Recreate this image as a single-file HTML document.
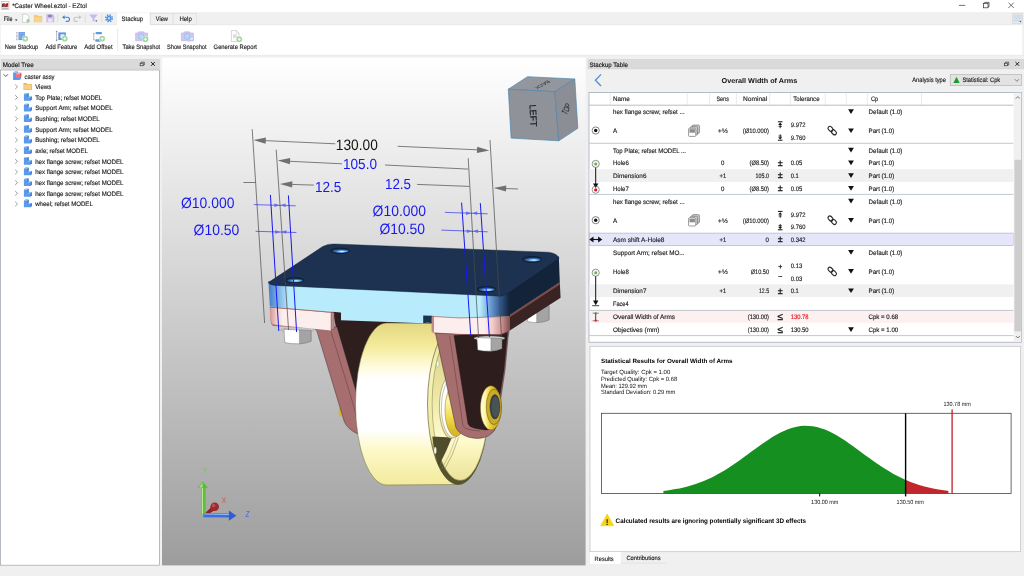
<!DOCTYPE html>
<html lang="en"><head><meta charset="utf-8"><title>*Caster Wheel.eztol - EZtol</title>
<style>html,body{margin:0;padding:0;background:#f0f0f0;overflow:hidden}body{width:1024px;height:576px;font-family:"Liberation Sans",sans-serif}svg{display:block;will-change:transform}</style></head>
<body>
<svg width="1024" height="576" viewBox="0 0 1024 576" font-family="'Liberation Sans', sans-serif" text-rendering="geometricPrecision">
<defs>
<linearGradient id="gView" x1="0" y1="0" x2="0" y2="1"><stop offset="0" stop-color="#ffffff"/><stop offset="1" stop-color="#9d9d9d"/></linearGradient>
<linearGradient id="gWheel" gradientUnits="userSpaceOnUse" x1="0" y1="322" x2="0" y2="486">
 <stop offset="0" stop-color="#e2d680"/><stop offset="0.15" stop-color="#f4eb9c"/><stop offset="0.28" stop-color="#fffce0"/><stop offset="0.35" stop-color="#ffffff"/><stop offset="0.66" stop-color="#ffffff"/><stop offset="0.78" stop-color="#fdf9c8"/><stop offset="1" stop-color="#f2ea9c"/></linearGradient>
<linearGradient id="gFrontL" gradientUnits="userSpaceOnUse" x1="268" y1="0" x2="289" y2="0"><stop offset="0" stop-color="#3e78c6"/><stop offset="0.5" stop-color="#7fb3e6"/><stop offset="1" stop-color="#b8ecfc"/></linearGradient>
<linearGradient id="gFrontR" gradientUnits="userSpaceOnUse" x1="480" y1="0" x2="509" y2="0"><stop offset="0" stop-color="#b8ecfc"/><stop offset="0.35" stop-color="#6c9fd6"/><stop offset="0.75" stop-color="#2c4f82"/><stop offset="1" stop-color="#15263e"/></linearGradient>
<linearGradient id="gPinkL" gradientUnits="userSpaceOnUse" x1="269" y1="0" x2="283" y2="0"><stop offset="0" stop-color="#cf8c8c"/><stop offset="0.55" stop-color="#f3d0d0"/><stop offset="1" stop-color="#fdeeee"/></linearGradient>
<linearGradient id="gPinkR" gradientUnits="userSpaceOnUse" x1="484" y1="0" x2="510" y2="0"><stop offset="0" stop-color="#fdeeee"/><stop offset="0.35" stop-color="#f0c8c8"/><stop offset="0.7" stop-color="#c88e8e"/><stop offset="1" stop-color="#7a4c4c"/></linearGradient>
<linearGradient id="gHole" x1="0" y1="0" x2="1" y2="0"><stop offset="0" stop-color="#3b6eb0"/><stop offset="0.6" stop-color="#9fd0f4"/><stop offset="1" stop-color="#4d83c4"/></linearGradient>
<linearGradient id="gHub" gradientUnits="userSpaceOnUse" x1="0" y1="350" x2="0" y2="450"><stop offset="0" stop-color="#e8e098"/><stop offset="0.35" stop-color="#ffffff"/><stop offset="0.6" stop-color="#fffde0"/><stop offset="1" stop-color="#d8cf7c"/></linearGradient>
<linearGradient id="gGold" gradientUnits="userSpaceOnUse" x1="0" y1="380" x2="0" y2="432"><stop offset="0" stop-color="#e8cf45"/><stop offset="0.4" stop-color="#fff6a8"/><stop offset="0.7" stop-color="#f4dc50"/><stop offset="1" stop-color="#d8b828"/></linearGradient>
<linearGradient id="gRim" gradientUnits="userSpaceOnUse" x1="0" y1="322" x2="0" y2="486"><stop offset="0" stop-color="#e6de96"/><stop offset="0.3" stop-color="#f7f2b6"/><stop offset="0.7" stop-color="#f1eaa4"/><stop offset="0.8" stop-color="#8a8650"/><stop offset="0.88" stop-color="#55532e"/><stop offset="1" stop-color="#55532e"/></linearGradient>
<linearGradient id="gInner" gradientUnits="userSpaceOnUse" x1="0" y1="330" x2="0" y2="482"><stop offset="0" stop-color="#d8d088"/><stop offset="0.4" stop-color="#ece5a0"/><stop offset="0.72" stop-color="#fffbd0"/><stop offset="0.85" stop-color="#f6f0b0"/><stop offset="1" stop-color="#e9e29a"/></linearGradient>
<linearGradient id="gBoss" gradientUnits="userSpaceOnUse" x1="480" y1="0" x2="495" y2="0"><stop offset="0" stop-color="#fffdf0"/><stop offset="0.35" stop-color="#fff4a0"/><stop offset="0.7" stop-color="#e8cc3a"/><stop offset="1" stop-color="#d4b428"/></linearGradient>
<radialGradient id="gHoleR" cx="0.58" cy="0.62" r="0.6"><stop offset="0" stop-color="#f0ffff"/><stop offset="0.22" stop-color="#9ad6fa"/><stop offset="0.6" stop-color="#3f78c0"/><stop offset="1" stop-color="#27497e"/></radialGradient>
<clipPath id="cView"><rect x="162" y="57" width="423.6" height="508.4"/></clipPath>
</defs>
<rect x="0" y="0" width="1024" height="576" fill="#f0f0f0"/>
<rect x="0" y="0" width="1024" height="12.2" fill="#ffffff"/>
<rect x="1.3" y="1.4" width="7.6" height="8.2" fill="#ffffff" stroke="#f3a3a6" stroke-width="0.7"/>
<rect x="2" y="4" width="6.2" height="2.6" fill="#e9343e"/>
<text x="2.1" y="7.2" font-size="5.6" fill="#2a2a2a" textLength="6" lengthAdjust="spacingAndGlyphs" font-weight="bold" font-style="italic">EZ</text>
<rect x="2.2" y="7.7" width="5.8" height="0.9" fill="#8c8c8c"/>
<text x="12.2" y="8.4" font-size="6.6" fill="#202020" textLength="74.6" lengthAdjust="spacingAndGlyphs" stroke="#202020" stroke-width="0.14">*Caster Wheel.eztol - EZtol</text>
<line x1="959" y1="5.4" x2="965.2" y2="5.4" stroke="#333" stroke-width="0.7" />
<rect x="983.4" y="3.4" width="4.6" height="4.4" fill="none" stroke="#333" stroke-width="0.7"/>
<path d="M984.6 3.4V2.4H989V6.8H988" fill="none" stroke="#333" stroke-width="0.7"/>
<line x1="1008.4" y1="2.6" x2="1013.8" y2="8" stroke="#333" stroke-width="0.7" />
<line x1="1013.8" y1="2.6" x2="1008.4" y2="8" stroke="#333" stroke-width="0.7" />
<rect x="0" y="12.2" width="1024" height="12.6" fill="#f0f0f0"/>
<rect x="0.8" y="24.8" width="1021.4" height="30.4" fill="#ffffff"/>
<line x1="0" y1="24.6" x2="117" y2="24.6" stroke="#e6e6e6" stroke-width="0.6" />
<rect x="117.2" y="12.6" width="32.8" height="13" fill="#ffffff"/>
<line x1="150.2" y1="12.6" x2="150.2" y2="24.8" stroke="#dcdcdc" stroke-width="0.6" />
<rect x="150.5" y="13.4" width="22.6" height="11.2" fill="#f0f0f0" stroke="#dadada" stroke-width="0.6"/>
<rect x="173.1" y="13.4" width="23.6" height="11.2" fill="#f0f0f0" stroke="#dadada" stroke-width="0.6"/>
<line x1="150.2" y1="24.7" x2="1022" y2="24.7" stroke="#e2e2e2" stroke-width="0.6" />
<text x="121.6" y="20.6" font-size="6.4" fill="#1a1a1a" textLength="21.6" lengthAdjust="spacingAndGlyphs" stroke="#1a1a1a" stroke-width="0.14">Stackup</text>
<text x="155.8" y="20.9" font-size="6.4" fill="#1a1a1a" textLength="12" lengthAdjust="spacingAndGlyphs" stroke="#1a1a1a" stroke-width="0.14">View</text>
<text x="179.4" y="20.9" font-size="6.4" fill="#1a1a1a" textLength="12.4" lengthAdjust="spacingAndGlyphs" stroke="#1a1a1a" stroke-width="0.14">Help</text>
<text x="3.8" y="20.7" font-size="6.4" fill="#1a1a1a" textLength="8.6" lengthAdjust="spacingAndGlyphs" stroke="#1a1a1a" stroke-width="0.14">File</text>
<path d="M14.9 19.4h2.6l-1.3 1.5z" fill="#222"/>
<path d="M22.6 14.2h4.2l2 2v6.2h-6.2z" fill="#ffffff" stroke="#b8b8b8" stroke-width="0.6"/>
<circle cx="28" cy="20.8" r="1.7" fill="#9ad29c"/>
<path d="M34.2 15.4h3l0.8 1h3.9v5.6h-7.7z" fill="#f3c76b" stroke="#e0b050" stroke-width="0.4"/>
<rect x="34.2" y="17.2" width="7.7" height="4.8" fill="#f7d487"/>
<path d="M46.6 14.6h6l1.4 1.2v6.2h-7.4z" fill="#cdbfea" stroke="#b9a8e0" stroke-width="0.4"/>
<rect x="48.2" y="14.8" width="3.6" height="2.4" fill="#8d7cc0"/>
<rect x="47.8" y="18.6" width="4.8" height="3.2" fill="#ece6f8"/>
<line x1="57.6" y1="14.2" x2="57.6" y2="22.4" stroke="#d4d4d4" stroke-width="0.6" />
<path d="M63.4 17.2h4a2.1 2.1 0 0 1 0 4.2h-1.6" fill="none" stroke="#3f86d6" stroke-width="1.1"/>
<path d="M62 17.2l2.6-2v4z" fill="#3f86d6"/>
<path d="M80 17.2h-4a2.1 2.1 0 0 0 0 4.2h1.6" fill="none" stroke="#c4c4c4" stroke-width="1.1"/>
<path d="M81.6 17.2l-2.6-2v4z" fill="#c4c4c4"/>
<line x1="85.2" y1="14.2" x2="85.2" y2="22.4" stroke="#d4d4d4" stroke-width="0.6" />
<path d="M89.2 14.6h8.6l-3.3 3.8v3.6l-2 -1v-2.6z" fill="#c9baea"/>
<path d="M95.2 20.6h2.2l-1.1 1.2z" fill="#222"/>
<line x1="101.8" y1="14.2" x2="101.8" y2="22.4" stroke="#d4d4d4" stroke-width="0.6" />
<circle cx="109" cy="18.3" r="3.3" fill="none" stroke="#4a8fe0" stroke-width="1.5" stroke-dasharray="1.4 1.2"/>
<circle cx="109" cy="18.3" r="2.6" fill="#4a8fe0"/>
<circle cx="109" cy="18.3" r="1.2" fill="#b9d6f6"/>
<rect x="1012.6" y="13.4" width="9.6" height="10" fill="#e6e6e6" stroke="#cfcfcf" stroke-width="0.5"/>
<line x1="1013.6" y1="16" x2="1021.6" y2="16" stroke="#a9c8ea" stroke-width="0.6" />
<line x1="1013.6" y1="18.2" x2="1021.6" y2="18.2" stroke="#a9c8ea" stroke-width="0.6" />
<line x1="1013.6" y1="20.4" x2="1021.6" y2="20.4" stroke="#a9c8ea" stroke-width="0.6" />
<path d="M1019.4 21h2l-1 1.1z" fill="#222"/>
<rect x="18.5" y="32.1" width="6.5" height="8" fill="#6497e2"/>
<line x1="18.5" y1="33.6" x2="25" y2="33.6" stroke="#a9c6f0" stroke-width="0.5" />
<line x1="18.5" y1="35.2" x2="25" y2="35.2" stroke="#a9c6f0" stroke-width="0.5" />
<line x1="18.5" y1="36.8" x2="25" y2="36.8" stroke="#a9c6f0" stroke-width="0.5" />
<line x1="18.5" y1="38.4" x2="25" y2="38.4" stroke="#a9c6f0" stroke-width="0.5" />
<line x1="16.9" y1="32.2" x2="16.9" y2="40" stroke="#9a9a9a" stroke-width="0.6" />
<line x1="16" y1="32.4" x2="17.8" y2="32.4" stroke="#9a9a9a" stroke-width="0.5" />
<line x1="16" y1="39.8" x2="17.8" y2="39.8" stroke="#9a9a9a" stroke-width="0.5" />
<line x1="16" y1="36.1" x2="17.8" y2="36.1" stroke="#9a9a9a" stroke-width="0.5" />
<circle cx="25.2" cy="38.7" r="3" fill="#8ed094" stroke="#f4fbf4" stroke-width="0.5"/>
<line x1="23.5" y1="38.7" x2="26.9" y2="38.7" stroke="#fff" stroke-width="1" />
<line x1="25.2" y1="37.0" x2="25.2" y2="40.400000000000006" stroke="#fff" stroke-width="1" />
<text x="4.8" y="48.7" font-size="6.4" fill="#1a1a1a" textLength="33.4" lengthAdjust="spacingAndGlyphs" stroke="#1a1a1a" stroke-width="0.14">New Stackup</text>
<rect x="58.3" y="32.4" width="7.6" height="7.6" fill="#6497e2"/>
<rect x="60.4" y="34.2" width="4.1" height="4.1" fill="#e4edfb" rx="0.9"/>
<line x1="56.6" y1="31.2" x2="56.6" y2="40.8" stroke="#8a8a8a" stroke-width="0.6" />
<path d="M56.6 30.4l1 1.6h-2zM56.6 41.4l1-1.6h-2z" fill="#8a8a8a"/>
<circle cx="64.8" cy="38.7" r="3" fill="#8ed094" stroke="#f4fbf4" stroke-width="0.5"/>
<line x1="63.099999999999994" y1="38.7" x2="66.5" y2="38.7" stroke="#fff" stroke-width="1" />
<line x1="64.8" y1="37.0" x2="64.8" y2="40.400000000000006" stroke="#fff" stroke-width="1" />
<text x="45.4" y="48.7" font-size="6.4" fill="#1a1a1a" textLength="31.8" lengthAdjust="spacingAndGlyphs" stroke="#1a1a1a" stroke-width="0.14">Add Feature</text>
<rect x="95.5" y="32.1" width="6.5" height="2.1" fill="#6497e2" rx="1"/>
<rect x="95.2" y="39.2" width="5.4" height="2.6" fill="#6497e2" rx="1"/>
<line x1="93.8" y1="33.4" x2="93.8" y2="39.8" stroke="#8a8a8a" stroke-width="0.6" />
<line x1="93" y1="33.4" x2="94.8" y2="33.4" stroke="#8a8a8a" stroke-width="0.5" />
<line x1="93" y1="39.8" x2="94.8" y2="39.8" stroke="#8a8a8a" stroke-width="0.5" />
<circle cx="102.2" cy="38.7" r="3" fill="#8ed094" stroke="#f4fbf4" stroke-width="0.5"/>
<line x1="100.5" y1="38.7" x2="103.9" y2="38.7" stroke="#fff" stroke-width="1" />
<line x1="102.2" y1="37.0" x2="102.2" y2="40.400000000000006" stroke="#fff" stroke-width="1" />
<text x="84.2" y="48.7" font-size="6.4" fill="#1a1a1a" textLength="28.4" lengthAdjust="spacingAndGlyphs" stroke="#1a1a1a" stroke-width="0.14">Add Offset</text>
<line x1="117.6" y1="28.4" x2="117.6" y2="51" stroke="#dcdcdc" stroke-width="0.6" />
<path d="M135.6 33.0h2.2l0.8-1.2h5.2l0.8 1.2h3v7.8h-12z" fill="#d3c6ef" stroke="#b5a5e2" stroke-width="0.5"/>
<circle cx="141.2" cy="36.4" r="2.8" fill="#b9d8f7" stroke="#88b4ea" stroke-width="0.6"/>
<circle cx="145.4" cy="39.2" r="3" fill="#8ed094" stroke="#f4fbf4" stroke-width="0.5"/>
<line x1="143.70000000000002" y1="39.2" x2="147.1" y2="39.2" stroke="#fff" stroke-width="1" />
<line x1="145.4" y1="37.5" x2="145.4" y2="40.900000000000006" stroke="#fff" stroke-width="1" />
<text x="122.6" y="48.7" font-size="6.4" fill="#1a1a1a" textLength="37.6" lengthAdjust="spacingAndGlyphs" stroke="#1a1a1a" stroke-width="0.14">Take Snapshot</text>
<path d="M181.4 33.0h2.2l0.8-1.2h5.2l0.8 1.2h3v7.8h-12z" fill="#d3c6ef" stroke="#b5a5e2" stroke-width="0.5"/>
<circle cx="187.0" cy="36.4" r="2.8" fill="#b9d8f7" stroke="#88b4ea" stroke-width="0.6"/>
<circle cx="191.6" cy="38.8" r="2" fill="#d6e8fa" stroke="#8cb6e8" stroke-width="0.5"/>
<line x1="190" y1="40.4" x2="188.6" y2="41.8" stroke="#8cb6e8" stroke-width="0.7" />
<text x="167" y="48.7" font-size="6.4" fill="#1a1a1a" textLength="39.6" lengthAdjust="spacingAndGlyphs" stroke="#1a1a1a" stroke-width="0.14">Show Snapshot</text>
<path d="M231.4 30.6h5l2.6 2.6v8.4h-7.6z" fill="#ffffff" stroke="#bcbcbc" stroke-width="0.6"/>
<path d="M236.4 30.6v2.6h2.6" fill="none" stroke="#bcbcbc" stroke-width="0.5"/>
<rect x="233" y="34.4" width="3.8" height="3.4" fill="#dcdcdc"/>
<circle cx="239.2" cy="39.2" r="3" fill="#8ed094" stroke="#f4fbf4" stroke-width="0.5"/>
<line x1="237.5" y1="39.2" x2="240.89999999999998" y2="39.2" stroke="#fff" stroke-width="1" />
<line x1="239.2" y1="37.5" x2="239.2" y2="40.900000000000006" stroke="#fff" stroke-width="1" />
<text x="213.6" y="48.7" font-size="6.4" fill="#1a1a1a" textLength="43.4" lengthAdjust="spacingAndGlyphs" stroke="#1a1a1a" stroke-width="0.14">Generate Report</text>
<line x1="0" y1="55.4" x2="1024" y2="55.4" stroke="#e4e4e4" stroke-width="0.6" />
<rect x="1.2" y="59.3" width="158.4" height="9.6" fill="#dadada" stroke="#cfcfcf" stroke-width="0.5"/>
<text x="2.7" y="66.6" font-size="6.4" fill="#111" textLength="31" lengthAdjust="spacingAndGlyphs" stroke="#111" stroke-width="0.14">Model Tree</text>
<rect x="140.1" y="63.2" width="3" height="2.6" fill="none" stroke="#222" stroke-width="0.6"/>
<path d="M141.1 63.2v-1h3.2v2.8h-1.2" fill="none" stroke="#222" stroke-width="0.6"/>
<line x1="151.0" y1="62" x2="154.8" y2="65.8" stroke="#111" stroke-width="0.9" />
<line x1="154.8" y1="62" x2="151.0" y2="65.8" stroke="#111" stroke-width="0.9" />
<rect x="0.6" y="70" width="159" height="495.2" fill="#ffffff" stroke="#9aa1ad" stroke-width="0.7"/>
<path d="M3.6 74.2l2.2 2.3l2.2-2.3" fill="none" stroke="#333" stroke-width="0.8"/>
<path d="M13.1 73L14.8 71.6L18 71.6L18 75.4L21.2 75.4L21.2 78.4L19.6 79.9L13.1 79.9z" fill="#5b9aea"/>
<path d="M13.1 73L14.8 71.6L18 71.6L16.6 73z" fill="#9cc4f6"/>
<path d="M15.9 74.2L17.4 72.8L21.3 72.8L21.3 76L19.8 77.4L15.9 77.4z" fill="#ee7680"/>
<path d="M15.9 74.2L17.4 72.8L21.3 72.8L19.8 74.2z" fill="#f8b0b6"/>
<path d="M19.8 74.2L21.3 72.8L21.3 76L19.8 77.4z" fill="#e25864"/>
<text x="24.6" y="78.5" font-size="6.4" fill="#1a1a1a" textLength="30" lengthAdjust="spacingAndGlyphs" stroke="#1a1a1a" stroke-width="0.14">caster assy</text>
<path d="M15.2 84.5l2.3 2.3l-2.3 2.3" fill="none" stroke="#7a7a7a" stroke-width="0.75"/>
<path d="M23.5 83.0h3l0.8 0.9h4.6v6.1h-8.4z" fill="#e3b25a"/>
<rect x="24" y="84.5" width="7.4" height="5" fill="#f6cf82"/>
<text x="35.2" y="89.1" font-size="6.4" fill="#1a1a1a" textLength="16" lengthAdjust="spacingAndGlyphs" stroke="#1a1a1a" stroke-width="0.14">Views</text>
<path d="M15.2 95.15l2.3 2.3l-2.3 2.3" fill="none" stroke="#7a7a7a" stroke-width="0.75"/>
<path d="M23.9 94.2L25.4 93.0L28.6 93.0L28.6 96.39999999999999L31.9 96.39999999999999L31.9 99.39999999999999L30.4 100.8L23.9 100.8z" fill="#5b9aea"/>
<path d="M23.9 94.2L25.4 93.0L28.6 93.0L27.2 94.2z" fill="#9cc4f6"/>
<path d="M27.2 97.6L28.6 96.39999999999999L31.9 96.39999999999999L30.4 97.6z" fill="#9cc4f6"/>
<path d="M27.2 94.2L28.6 93.0L28.6 96.39999999999999L27.2 97.6z" fill="#447fd6"/>
<path d="M30.4 97.6L31.9 96.39999999999999L31.9 99.39999999999999L30.4 100.8z" fill="#447fd6"/>
<text x="35.2" y="99.75" font-size="6.4" fill="#1a1a1a" textLength="67" lengthAdjust="spacingAndGlyphs" stroke="#1a1a1a" stroke-width="0.14">Top Plate; refset MODEL</text>
<path d="M15.2 105.8l2.3 2.3l-2.3 2.3" fill="none" stroke="#7a7a7a" stroke-width="0.75"/>
<path d="M23.9 104.85L25.4 103.64999999999999L28.6 103.64999999999999L28.6 107.04999999999998L31.9 107.04999999999998L31.9 110.04999999999998L30.4 111.44999999999999L23.9 111.44999999999999z" fill="#5b9aea"/>
<path d="M23.9 104.85L25.4 103.64999999999999L28.6 103.64999999999999L27.2 104.85z" fill="#9cc4f6"/>
<path d="M27.2 108.24999999999999L28.6 107.04999999999998L31.9 107.04999999999998L30.4 108.24999999999999z" fill="#9cc4f6"/>
<path d="M27.2 104.85L28.6 103.64999999999999L28.6 107.04999999999998L27.2 108.24999999999999z" fill="#447fd6"/>
<path d="M30.4 108.24999999999999L31.9 107.04999999999998L31.9 110.04999999999998L30.4 111.44999999999999z" fill="#447fd6"/>
<text x="35.2" y="110.39999999999999" font-size="6.4" fill="#1a1a1a" textLength="77.5" lengthAdjust="spacingAndGlyphs" stroke="#1a1a1a" stroke-width="0.14">Support Arm; refset MODEL</text>
<path d="M15.2 116.45l2.3 2.3l-2.3 2.3" fill="none" stroke="#7a7a7a" stroke-width="0.75"/>
<path d="M23.9 115.5L25.4 114.3L28.6 114.3L28.6 117.69999999999999L31.9 117.69999999999999L31.9 120.69999999999999L30.4 122.1L23.9 122.1z" fill="#5b9aea"/>
<path d="M23.9 115.5L25.4 114.3L28.6 114.3L27.2 115.5z" fill="#9cc4f6"/>
<path d="M27.2 118.89999999999999L28.6 117.69999999999999L31.9 117.69999999999999L30.4 118.89999999999999z" fill="#9cc4f6"/>
<path d="M27.2 115.5L28.6 114.3L28.6 117.69999999999999L27.2 118.89999999999999z" fill="#447fd6"/>
<path d="M30.4 118.89999999999999L31.9 117.69999999999999L31.9 120.69999999999999L30.4 122.1z" fill="#447fd6"/>
<text x="35.2" y="121.05" font-size="6.4" fill="#1a1a1a" textLength="64.5" lengthAdjust="spacingAndGlyphs" stroke="#1a1a1a" stroke-width="0.14">Bushing; refset MODEL</text>
<path d="M15.2 127.1l2.3 2.3l-2.3 2.3" fill="none" stroke="#7a7a7a" stroke-width="0.75"/>
<path d="M23.9 126.14999999999999L25.4 124.94999999999999L28.6 124.94999999999999L28.6 128.35L31.9 128.35L31.9 131.35L30.4 132.75L23.9 132.75z" fill="#5b9aea"/>
<path d="M23.9 126.14999999999999L25.4 124.94999999999999L28.6 124.94999999999999L27.2 126.14999999999999z" fill="#9cc4f6"/>
<path d="M27.2 129.54999999999998L28.6 128.35L31.9 128.35L30.4 129.54999999999998z" fill="#9cc4f6"/>
<path d="M27.2 126.14999999999999L28.6 124.94999999999999L28.6 128.35L27.2 129.54999999999998z" fill="#447fd6"/>
<path d="M30.4 129.54999999999998L31.9 128.35L31.9 131.35L30.4 132.75z" fill="#447fd6"/>
<text x="35.2" y="131.7" font-size="6.4" fill="#1a1a1a" textLength="77.5" lengthAdjust="spacingAndGlyphs" stroke="#1a1a1a" stroke-width="0.14">Support Arm; refset MODEL</text>
<path d="M15.2 137.75l2.3 2.3l-2.3 2.3" fill="none" stroke="#7a7a7a" stroke-width="0.75"/>
<path d="M23.9 136.8L25.4 135.6L28.6 135.6L28.6 139.0L31.9 139.0L31.9 142.0L30.4 143.4L23.9 143.4z" fill="#5b9aea"/>
<path d="M23.9 136.8L25.4 135.6L28.6 135.6L27.2 136.8z" fill="#9cc4f6"/>
<path d="M27.2 140.20000000000002L28.6 139.0L31.9 139.0L30.4 140.20000000000002z" fill="#9cc4f6"/>
<path d="M27.2 136.8L28.6 135.6L28.6 139.0L27.2 140.20000000000002z" fill="#447fd6"/>
<path d="M30.4 140.20000000000002L31.9 139.0L31.9 142.0L30.4 143.4z" fill="#447fd6"/>
<text x="35.2" y="142.35" font-size="6.4" fill="#1a1a1a" textLength="64.5" lengthAdjust="spacingAndGlyphs" stroke="#1a1a1a" stroke-width="0.14">Bushing; refset MODEL</text>
<path d="M15.2 148.4l2.3 2.3l-2.3 2.3" fill="none" stroke="#7a7a7a" stroke-width="0.75"/>
<path d="M23.9 147.45000000000002L25.4 146.25L28.6 146.25L28.6 149.65L31.9 149.65L31.9 152.65L30.4 154.05L23.9 154.05z" fill="#5b9aea"/>
<path d="M23.9 147.45000000000002L25.4 146.25L28.6 146.25L27.2 147.45000000000002z" fill="#9cc4f6"/>
<path d="M27.2 150.85000000000002L28.6 149.65L31.9 149.65L30.4 150.85000000000002z" fill="#9cc4f6"/>
<path d="M27.2 147.45000000000002L28.6 146.25L28.6 149.65L27.2 150.85000000000002z" fill="#447fd6"/>
<path d="M30.4 150.85000000000002L31.9 149.65L31.9 152.65L30.4 154.05z" fill="#447fd6"/>
<text x="35.2" y="153.0" font-size="6.4" fill="#1a1a1a" textLength="52.6" lengthAdjust="spacingAndGlyphs" stroke="#1a1a1a" stroke-width="0.14">axle; refset MODEL</text>
<path d="M15.2 159.04999999999998l2.3 2.3l-2.3 2.3" fill="none" stroke="#7a7a7a" stroke-width="0.75"/>
<path d="M23.9 158.1L25.4 156.89999999999998L28.6 156.89999999999998L28.6 160.29999999999998L31.9 160.29999999999998L31.9 163.29999999999998L30.4 164.7L23.9 164.7z" fill="#5b9aea"/>
<path d="M23.9 158.1L25.4 156.89999999999998L28.6 156.89999999999998L27.2 158.1z" fill="#9cc4f6"/>
<path d="M27.2 161.5L28.6 160.29999999999998L31.9 160.29999999999998L30.4 161.5z" fill="#9cc4f6"/>
<path d="M27.2 158.1L28.6 156.89999999999998L28.6 160.29999999999998L27.2 161.5z" fill="#447fd6"/>
<path d="M30.4 161.5L31.9 160.29999999999998L31.9 163.29999999999998L30.4 164.7z" fill="#447fd6"/>
<text x="35.2" y="163.64999999999998" font-size="6.4" fill="#1a1a1a" textLength="88.3" lengthAdjust="spacingAndGlyphs" stroke="#1a1a1a" stroke-width="0.14">hex flange screw; refset MODEL</text>
<path d="M15.2 169.70000000000002l2.3 2.3l-2.3 2.3" fill="none" stroke="#7a7a7a" stroke-width="0.75"/>
<path d="M23.9 168.75000000000003L25.4 167.55L28.6 167.55L28.6 170.95000000000002L31.9 170.95000000000002L31.9 173.95000000000002L30.4 175.35000000000002L23.9 175.35000000000002z" fill="#5b9aea"/>
<path d="M23.9 168.75000000000003L25.4 167.55L28.6 167.55L27.2 168.75000000000003z" fill="#9cc4f6"/>
<path d="M27.2 172.15000000000003L28.6 170.95000000000002L31.9 170.95000000000002L30.4 172.15000000000003z" fill="#9cc4f6"/>
<path d="M27.2 168.75000000000003L28.6 167.55L28.6 170.95000000000002L27.2 172.15000000000003z" fill="#447fd6"/>
<path d="M30.4 172.15000000000003L31.9 170.95000000000002L31.9 173.95000000000002L30.4 175.35000000000002z" fill="#447fd6"/>
<text x="35.2" y="174.3" font-size="6.4" fill="#1a1a1a" textLength="88.3" lengthAdjust="spacingAndGlyphs" stroke="#1a1a1a" stroke-width="0.14">hex flange screw; refset MODEL</text>
<path d="M15.2 180.35l2.3 2.3l-2.3 2.3" fill="none" stroke="#7a7a7a" stroke-width="0.75"/>
<path d="M23.9 179.4L25.4 178.2L28.6 178.2L28.6 181.6L31.9 181.6L31.9 184.6L30.4 186.0L23.9 186.0z" fill="#5b9aea"/>
<path d="M23.9 179.4L25.4 178.2L28.6 178.2L27.2 179.4z" fill="#9cc4f6"/>
<path d="M27.2 182.8L28.6 181.6L31.9 181.6L30.4 182.8z" fill="#9cc4f6"/>
<path d="M27.2 179.4L28.6 178.2L28.6 181.6L27.2 182.8z" fill="#447fd6"/>
<path d="M30.4 182.8L31.9 181.6L31.9 184.6L30.4 186.0z" fill="#447fd6"/>
<text x="35.2" y="184.95" font-size="6.4" fill="#1a1a1a" textLength="88.3" lengthAdjust="spacingAndGlyphs" stroke="#1a1a1a" stroke-width="0.14">hex flange screw; refset MODEL</text>
<path d="M15.2 191.0l2.3 2.3l-2.3 2.3" fill="none" stroke="#7a7a7a" stroke-width="0.75"/>
<path d="M23.9 190.05L25.4 188.85L28.6 188.85L28.6 192.25L31.9 192.25L31.9 195.25L30.4 196.65L23.9 196.65z" fill="#5b9aea"/>
<path d="M23.9 190.05L25.4 188.85L28.6 188.85L27.2 190.05z" fill="#9cc4f6"/>
<path d="M27.2 193.45000000000002L28.6 192.25L31.9 192.25L30.4 193.45000000000002z" fill="#9cc4f6"/>
<path d="M27.2 190.05L28.6 188.85L28.6 192.25L27.2 193.45000000000002z" fill="#447fd6"/>
<path d="M30.4 193.45000000000002L31.9 192.25L31.9 195.25L30.4 196.65z" fill="#447fd6"/>
<text x="35.2" y="195.6" font-size="6.4" fill="#1a1a1a" textLength="88.3" lengthAdjust="spacingAndGlyphs" stroke="#1a1a1a" stroke-width="0.14">hex flange screw; refset MODEL</text>
<path d="M15.2 201.65l2.3 2.3l-2.3 2.3" fill="none" stroke="#7a7a7a" stroke-width="0.75"/>
<path d="M23.9 200.70000000000002L25.4 199.5L28.6 199.5L28.6 202.9L31.9 202.9L31.9 205.9L30.4 207.3L23.9 207.3z" fill="#5b9aea"/>
<path d="M23.9 200.70000000000002L25.4 199.5L28.6 199.5L27.2 200.70000000000002z" fill="#9cc4f6"/>
<path d="M27.2 204.10000000000002L28.6 202.9L31.9 202.9L30.4 204.10000000000002z" fill="#9cc4f6"/>
<path d="M27.2 200.70000000000002L28.6 199.5L28.6 202.9L27.2 204.10000000000002z" fill="#447fd6"/>
<path d="M30.4 204.10000000000002L31.9 202.9L31.9 205.9L30.4 207.3z" fill="#447fd6"/>
<text x="35.2" y="206.25" font-size="6.4" fill="#1a1a1a" textLength="57.6" lengthAdjust="spacingAndGlyphs" stroke="#1a1a1a" stroke-width="0.14">wheel; refset MODEL</text>
<rect x="162" y="57.7" width="423.6" height="507.7" fill="url(#gView)"/>
<g clip-path="url(#cView)">
<path d="M526.6 305L549.0 306L549.0 320.0Q544.9680000000001 322.0 536.6800000000001 322.6Q532.2 322.8 527.4 321.40000000000003z" fill="#ffffff" stroke="#555" stroke-width="0.4"/>
<path d="M536.6800000000001 305.6L549.0 306L549.0 320.0Q544.9680000000001 322.0 536.6800000000001 322.6z" fill="#a4a4a4" stroke="#555" stroke-width="0.3"/>
<ellipse cx="341" cy="411.6" rx="2.4" ry="5" fill="#d8b830"/>
<path d="M333 311L396 321L440 322L440 336L396 340L360 425L352 420z" fill="#2e1e1e"/>
<path d="M312 327.6Q316 328.4 317 331.6L344.3 421.7Q348 429.6 358 434L358 398L337 326.8z" fill="#a66e6e" stroke="#2a1a1a" stroke-width="0.4"/>
<path d="M331 331.6L354 407L357 420" fill="none" stroke="#5e3a3a" stroke-width="0.5"/>
<path d="M386.5 323A31 81 0 0 0 386.5 485L458 484.5A30.5 80.5 0 0 0 458 323.5z" fill="url(#gWheel)" stroke="#6b6838" stroke-width="0.5"/>
<ellipse cx="458" cy="404" rx="30.5" ry="80.5" fill="url(#gRim)" stroke="#4e4b28" stroke-width="0.6"/>
<ellipse cx="460.2" cy="403.4" rx="28.1" ry="77.1" fill="url(#gInner)" stroke="#5e5b30" stroke-width="0.4"/>
<path d="M432.4 436.6L451.6 437.4Q446 452 438.6 465.4Q433.8 452 432.4 436.6z" fill="#4f4d2b"/>
<path d="M451.6 437.4Q446 452 438.6 465.4" fill="none" stroke="#3a3820" stroke-width="0.5"/>
<path d="M458.6 437.4Q453 456 443.6 471" fill="none" stroke="#6b6838" stroke-width="0.45"/>
<path d="M456 437.4Q450.4 455 441.6 469" fill="none" stroke="#8a864a" stroke-width="0.4"/>
<ellipse cx="437.8" cy="364" rx="1.3" ry="3.2" fill="#fbfbf4" stroke="#6b6838" stroke-width="0.3"/>
<ellipse cx="435.2" cy="450.4" rx="1.3" ry="3.4" fill="#fbfbf4" stroke="#6b6838" stroke-width="0.3"/>
<ellipse cx="451" cy="407" rx="11.6" ry="31.4" fill="url(#gHub)" stroke="#5e5b30" stroke-width="0.45"/>
<ellipse cx="453.4" cy="407.6" rx="12" ry="30" fill="#ffffff" stroke="#77733c" stroke-width="0.4"/>
<ellipse cx="455.8" cy="410" rx="10.8" ry="26.6" fill="url(#gGold)" stroke="#6b5a10" stroke-width="0.4"/>
<path d="M435.4 333L456 427.8Q459 434 468 437Q480 440.4 489 435.6Q495 431.6 496.6 426L505 370L508 338L509 331z" fill="#a66e6e" stroke="#2a1a1a" stroke-width="0.45"/>
<path d="M454 335.6L468 423.8Q469.6 427.4 475 428.2L482 429.6Q490 431 494 426L496 420L504 370L507 338L507.6 332z" fill="#2e1d1d" stroke="#1c1010" stroke-width="0.4"/>
<path d="M449.6 335.6L463 425.6Q464.6 429 470 429.8L480 431" fill="none" stroke="#5e3a3a" stroke-width="0.5"/>
<ellipse cx="490.9" cy="407.8" rx="10.5" ry="22" fill="url(#gBoss)" stroke="#6b5a10" stroke-width="0.4"/>
<ellipse cx="493.9" cy="406.8" rx="7.6" ry="17.8" fill="#c9ab2a" stroke="#5c4c10" stroke-width="0.5"/>
<ellipse cx="494.9" cy="406.8" rx="5" ry="12.2" fill="#3a4246" stroke="#222" stroke-width="0.4"/>
<ellipse cx="495.5" cy="406.8" rx="3.8" ry="10.4" fill="#495256"/>
<ellipse cx="297.5" cy="330.0" rx="16.74" ry="2.2" fill="#d4d4d4" stroke="#666" stroke-width="0.3"/>
<path d="M284 329.4L311 330.4L311 341.19999999999993Q306.14 343.19999999999993 299.39 343.79999999999995Q290.75 343.99999999999994 284.8 342.59999999999997z" fill="#ffffff" stroke="#555" stroke-width="0.4"/>
<path d="M299.39 330.0L311 330.4L311 341.19999999999993Q306.14 343.19999999999993 299.39 343.79999999999995z" fill="#a4a4a4" stroke="#555" stroke-width="0.3"/>
<ellipse cx="489.4" cy="338.20000000000005" rx="15.5" ry="2.2" fill="#d4d4d4" stroke="#666" stroke-width="0.3"/>
<path d="M476.9 337.6L501.9 338.6L501.9 348.6Q497.4 350.6 490.9 351.20000000000005Q483.15 351.40000000000003 477.7 350.00000000000006z" fill="#ffffff" stroke="#555" stroke-width="0.4"/>
<path d="M490.9 338.20000000000005L501.9 338.6L501.9 348.6Q497.4 350.6 490.9 351.20000000000005z" fill="#a4a4a4" stroke="#555" stroke-width="0.3"/>
<path d="M509 290L558.8 256.2L559.8 282.2L509 315.4z" fill="#13233a"/>
<path d="M509.4 315.2L559.8 282.2L560.6 297.8L509.4 330.8z" fill="#3a2323"/>
<path d="M509.4 315.2L559.8 282.2L559.9 284.4L509.4 317.4z" fill="#7a4c4c"/>
<path d="M268.6 282L273 283L500 293L500 317L460 317.6L432.3 316L432.3 321.8L423.4 323.3L341 320.2L341 312.4L269.8 306.6z" fill="#b8ecfc"/>
<path d="M268.4 281L289 283L289 308.4L269.8 306.6z" fill="url(#gFrontL)"/>
<path d="M480 292L504 293L510 288L510 316.2L480 317.2z" fill="url(#gFrontR)"/>
<path d="M423.2 315.4L432.3 315.8L432.3 321.8L423.2 323.3z" fill="#1c3350"/>
<path d="M268.2 282.6L322.6 246.6Q328 243.4 335 244L548 252.2Q556 252.8 558.8 257.6L559 258.6L512 290.6Q507 294.6 501 296.2L275 285.4Q269.4 285 268.2 282.6z" fill="#1c3250" stroke="#0e1c30" stroke-width="0.4"/>
<ellipse cx="294.5" cy="280.2" rx="9.1" ry="2.5" fill="#152b4a" stroke="#0b1728" stroke-width="0.7"/><ellipse cx="294.9" cy="280.45" rx="7.826" ry="1.7000000000000002" fill="url(#gHoleR)"/>
<ellipse cx="340.2" cy="250.8" rx="9.4" ry="2.7" fill="#152b4a" stroke="#0b1728" stroke-width="0.7"/><ellipse cx="340.59999999999997" cy="251.05" rx="8.084" ry="1.8360000000000003" fill="url(#gHoleR)"/>
<ellipse cx="532" cy="259.4" rx="9.6" ry="2.9" fill="#152b4a" stroke="#0b1728" stroke-width="0.7"/><ellipse cx="532.4" cy="259.65" rx="8.256" ry="1.972" fill="url(#gHoleR)"/>
<ellipse cx="486.4" cy="289.2" rx="9.2" ry="2.7" fill="#152b4a" stroke="#0b1728" stroke-width="0.7"/><ellipse cx="486.79999999999995" cy="289.45" rx="7.911999999999999" ry="1.8360000000000003" fill="url(#gHoleR)"/>
<path d="M269.8 307L333 312.4L333 329.6L316 328.2L273 326Q270.6 324 270.4 320z" fill="#a66e6e"/>
<path d="M269.8 307.4L331 312.8L331 330.4L281.5 325.5L272.4 324.2Q270.2 321.6 270 318z" fill="url(#gPinkL)"/>
<path d="M331 312.8L334.2 312.4L334.2 329L331 330z" fill="#c48a8a" stroke="#2a1a1a" stroke-width="0.3"/>
<path d="M269.8 307.2L333 312.4" fill="none" stroke="#8a5555" stroke-width="0.6"/>
<path d="M431.6 316.4L434 316.6L434 333L431.6 332z" fill="#c48a8a"/>
<path d="M434 316.6L460 318L509.4 316.4L509.4 331L500 334.6L460 334.2L434 332.8z" fill="url(#gPinkR)"/>
<path d="M432 316.4L460 318L509.4 316.4" fill="none" stroke="#8a5555" stroke-width="0.6"/>
<path d="M434 333L460 334.4L500 335L509.4 331" fill="none" stroke="#7a4a4a" stroke-width="0.8"/>
<line x1="252.2" y1="129.2" x2="264.6" y2="323" stroke="#4a4a4a" stroke-width="0.7" />
<line x1="276.2" y1="149.7" x2="288.6" y2="330" stroke="#4a4a4a" stroke-width="0.7" />
<line x1="243.4" y1="182.5" x2="255.6" y2="182.5" stroke="#4a4a4a" stroke-width="0.7" />
<line x1="490" y1="140" x2="501.5" y2="336" stroke="#4a4a4a" stroke-width="0.7" />
<line x1="468.2" y1="158.2" x2="478.6" y2="338" stroke="#4a4a4a" stroke-width="0.7" />
<line x1="258" y1="140.3" x2="335.3" y2="143.8" stroke="#4a4a4a" stroke-width="0.7" />
<path d="M253.4 140.0L265.6 143.7L265.9 137.5z" fill="#707070"/>
<line x1="397.7" y1="146.3" x2="484" y2="150.1" stroke="#4a4a4a" stroke-width="0.7" />
<path d="M489.4 150.4L477.2 146.7L476.9 152.9z" fill="#707070"/>
<text x="335.8" y="149.8" font-size="15" fill="#111" textLength="42" lengthAdjust="spacingAndGlyphs">130.00</text>
<line x1="282" y1="160.9" x2="342" y2="163.8" stroke="#4a4a4a" stroke-width="0.7" />
<path d="M277.7 160.6L289.9 164.3L290.2 158.1z" fill="#707070"/>
<line x1="385" y1="165" x2="468.2" y2="169.1" stroke="#4a4a4a" stroke-width="0.7" />
<text x="343" y="169.3" font-size="14.6" fill="#1818f0" textLength="34" lengthAdjust="spacingAndGlyphs">105.0</text>
<line x1="284" y1="184.2" x2="313.9" y2="185.1" stroke="#4a4a4a" stroke-width="0.7" />
<path d="M279.9 184.0L292.2 187.5L292.4 181.3z" fill="#707070"/>
<text x="315" y="191.7" font-size="14.6" fill="#1818f0" textLength="26.4" lengthAdjust="spacingAndGlyphs">12.5</text>
<text x="385" y="188.8" font-size="14.6" fill="#1818f0" textLength="26" lengthAdjust="spacingAndGlyphs">12.5</text>
<line x1="417.1" y1="184.4" x2="469.4" y2="186.4" stroke="#4a4a4a" stroke-width="0.7" />
<line x1="498" y1="188.2" x2="518" y2="189" stroke="#4a4a4a" stroke-width="0.7" />
<path d="M493.7 188.0L506.0 191.6L506.2 185.4z" fill="#707070"/>
<text x="181" y="208" font-size="15" fill="#1818f0" textLength="53.4" lengthAdjust="spacingAndGlyphs">Ø10.000</text>
<text x="193.6" y="234.7" font-size="15" fill="#1818f0" textLength="45.7" lengthAdjust="spacingAndGlyphs">Ø10.50</text>
<line x1="253.9" y1="204.6" x2="295.7" y2="205.8" stroke="#1818f0" stroke-width="0.6" />
<line x1="255.6" y1="231.3" x2="296.4" y2="232.5" stroke="#1818f0" stroke-width="0.6" />
<line x1="270.4" y1="194.9" x2="278.8" y2="331" stroke="#1818f0" stroke-width="1" />
<line x1="288.4" y1="195.4" x2="296.6" y2="332" stroke="#1818f0" stroke-width="1" />
<path d="M279.8 205.3L274.4 203.6L274.4 207.0z" fill="#6868f2"/>
<path d="M280.2 205.3L285.6 207.0L285.6 203.6z" fill="#6868f2"/>
<path d="M280.6 232.0L275.2 230.3L275.2 233.7z" fill="#6868f2"/>
<path d="M281.0 232.0L286.4 233.7L286.4 230.3z" fill="#6868f2"/>
<text x="372.6" y="216" font-size="15" fill="#1818f0" textLength="53.4" lengthAdjust="spacingAndGlyphs">Ø10.000</text>
<text x="379.4" y="233.5" font-size="15" fill="#1818f0" textLength="45.7" lengthAdjust="spacingAndGlyphs">Ø10.50</text>
<line x1="445" y1="212.4" x2="487.6" y2="213.8" stroke="#1818f0" stroke-width="0.6" />
<line x1="441.4" y1="230.1" x2="487.6" y2="231.8" stroke="#1818f0" stroke-width="0.6" />
<line x1="461.6" y1="202.6" x2="470.8" y2="336" stroke="#1818f0" stroke-width="1" />
<line x1="480.3" y1="203.1" x2="489.4" y2="337" stroke="#1818f0" stroke-width="1" />
<path d="M471.4 213.2L466.0 211.5L466.0 214.9z" fill="#6868f2"/>
<path d="M471.8 213.2L477.2 214.9L477.2 211.5z" fill="#6868f2"/>
<path d="M472.2 231.2L466.8 229.5L466.8 232.9z" fill="#6868f2"/>
<path d="M472.6 231.2L478.0 232.9L478.0 229.5z" fill="#6868f2"/>
<polygon points="508.3,89.2 527.5,76.7 574.8,79 554.8,91.7" fill="#93979d" stroke="#4f86ad" stroke-width="0.7" stroke-linejoin="round"/>
<polygon points="508.3,89.2 554.8,91.7 558.75,140.8 511.1,138.1" fill="#8f9298" stroke="#4f86ad" stroke-width="0.7" stroke-linejoin="round"/>
<polygon points="554.8,91.7 574.8,79 577.8,128.3 558.75,140.8" fill="#8b8e95" stroke="#4f86ad" stroke-width="0.7" stroke-linejoin="round"/>
<text transform="translate(529.4 104.8) rotate(87) scale(1 1.2)" font-size="7.8" fill="#141414" textLength="21.8" lengthAdjust="spacingAndGlyphs" stroke="#141414" stroke-width="0.15">LEFT</text>
<text transform="translate(566.4 115.4) rotate(-62) skewX(-6) scale(1 1.45)" font-size="6" fill="#222" textLength="10.9" lengthAdjust="spacingAndGlyphs">TOP</text>
<text transform="translate(547.4 80.2) rotate(150) skewX(35) scale(1 0.62)" font-size="7" fill="#2c2c2c" textLength="15.4" lengthAdjust="spacingAndGlyphs">BACK</text>
<path d="M204.6 513.4L213 505.6L216.6 509L207 515z" fill="#8e2424"/>
<circle cx="214.7" cy="506.7" r="4.3" fill="#9c2a2a"/><circle cx="213.6" cy="505.6" r="1.8" fill="#c04848"/>
<rect x="201.2" y="487.4" width="4.5" height="27.4" fill="#62bf3c"/>
<rect x="201.8" y="487.4" width="1.2" height="27" fill="#b4ea8e"/>
<path d="M197.6 488L207.9 488L202.7 481.6z" fill="#5cbb38"/>
<path d="M199 487.6L202.7 482.4L202.4 487.6z" fill="#a6e480"/>
<path d="M203.4 513L229 513.4L229 517.6L203.4 517.2z" fill="#3a6ee0"/>
<path d="M204 513.6L229 514L229 514.9L204 514.6z" fill="#9cbcf6"/>
<path d="M228.9 510.6L236.4 515.7L228.9 520.8z" fill="#2e5ed2"/>
<text x="202.9" y="472.9" font-size="7.6" fill="#7cc45a" textLength="4.4" lengthAdjust="spacingAndGlyphs" stroke="#7cc45a" stroke-width="0.14">Y</text>
<text x="221.7" y="503.4" font-size="8" fill="#cf6060" textLength="4.2" lengthAdjust="spacingAndGlyphs" stroke="#cf6060" stroke-width="0.14">X</text>
<text x="245.4" y="516.6" font-size="8.6" fill="#4c74dc" textLength="3.8" lengthAdjust="spacingAndGlyphs" font-style="italic" stroke="#4c74dc" stroke-width="0.14">Z</text>
</g>
<rect x="588" y="59.3" width="436" height="9.6" fill="#dadada" stroke="#cfcfcf" stroke-width="0.5"/>
<text x="589.5" y="66.6" font-size="6.4" fill="#111" textLength="38.4" lengthAdjust="spacingAndGlyphs" stroke="#111" stroke-width="0.14">Stackup Table</text>
<rect x="1004.5" y="63.2" width="3" height="2.6" fill="none" stroke="#222" stroke-width="0.6"/>
<path d="M1005.5 63.2v-1h3.2v2.8h-1.2" fill="none" stroke="#222" stroke-width="0.6"/>
<line x1="1015.4" y1="62" x2="1019.1999999999999" y2="65.8" stroke="#111" stroke-width="0.9" />
<line x1="1019.1999999999999" y1="62" x2="1015.4" y2="65.8" stroke="#111" stroke-width="0.9" />
<path d="M601 74.4l-5.6 5.8l5.6 5.8" fill="none" stroke="#4d8edb" stroke-width="1.3"/>
<text x="721.6" y="82.6" font-size="7" fill="#111" textLength="75.6" lengthAdjust="spacingAndGlyphs" font-weight="bold">Overall Width of Arms</text>
<text x="912.2" y="82.3" font-size="6.4" fill="#1a1a1a" textLength="33.8" lengthAdjust="spacingAndGlyphs" stroke="#1a1a1a" stroke-width="0.14">Analysis type</text>
<rect x="950.2" y="74.5" width="71.2" height="11.2" fill="#e3e3e3" stroke="#adadad" stroke-width="0.6"/>
<path d="M953.4 83l3.1-6.2l3.1 6.2z" fill="#1a9c2b"/>
<text x="962.4" y="82.3" font-size="6.4" fill="#1a1a1a" textLength="37.8" lengthAdjust="spacingAndGlyphs" stroke="#1a1a1a" stroke-width="0.14">Statistical: Cpk</text>
<path d="M1014.8 79.2l2.1 2.1l2.1-2.1" fill="none" stroke="#555" stroke-width="0.7"/>
<rect x="589" y="92.4" width="432.6" height="249.8" fill="#ffffff" stroke="#9aa3b2" stroke-width="0.7"/>
<rect x="589.4" y="169.2" width="424" height="12.7" fill="#f0f0f0"/>
<rect x="589.4" y="284.4" width="424" height="12.5" fill="#f0f0f0"/>
<rect x="589.4" y="233.1" width="424" height="12.5" fill="#e6e6fa" stroke="#a4acc8" stroke-width="0.6"/>
<rect x="589.4" y="310.5" width="424" height="12.3" fill="#fdf0f0"/>
<line x1="610.2" y1="93" x2="610.2" y2="104.8" stroke="#e2e2e2" stroke-width="0.7" />
<line x1="687.2" y1="93" x2="687.2" y2="104.8" stroke="#e2e2e2" stroke-width="0.7" />
<line x1="709.4" y1="93" x2="709.4" y2="104.8" stroke="#e2e2e2" stroke-width="0.7" />
<line x1="736.4" y1="93" x2="736.4" y2="104.8" stroke="#e2e2e2" stroke-width="0.7" />
<line x1="769.7" y1="93" x2="769.7" y2="104.8" stroke="#e2e2e2" stroke-width="0.7" />
<line x1="790.4" y1="93" x2="790.4" y2="104.8" stroke="#e2e2e2" stroke-width="0.7" />
<line x1="825.2" y1="93" x2="825.2" y2="104.8" stroke="#e2e2e2" stroke-width="0.7" />
<line x1="846.3" y1="93" x2="846.3" y2="104.8" stroke="#e2e2e2" stroke-width="0.7" />
<line x1="867.4" y1="93" x2="867.4" y2="104.8" stroke="#e2e2e2" stroke-width="0.7" />
<line x1="921.5" y1="93" x2="921.5" y2="104.8" stroke="#e2e2e2" stroke-width="0.7" />
<line x1="589.4" y1="105.2" x2="1013.4" y2="105.2" stroke="#9aa3b2" stroke-width="0.7" />
<line x1="589.4" y1="143.3" x2="1013.4" y2="143.3" stroke="#a8b0bc" stroke-width="0.7" />
<line x1="589.4" y1="194.4" x2="1013.4" y2="194.4" stroke="#a8b0bc" stroke-width="0.7" />
<line x1="589.4" y1="310.4" x2="1013.4" y2="310.4" stroke="#a8b0bc" stroke-width="0.7" />
<line x1="589.4" y1="335.6" x2="1013.4" y2="335.6" stroke="#a8b0bc" stroke-width="0.7" />
<text x="613" y="101.3" font-size="6.4" fill="#1a1a1a" textLength="16.8" lengthAdjust="spacingAndGlyphs" stroke="#1a1a1a" stroke-width="0.14">Name</text>
<text x="716.4" y="101.3" font-size="6.4" fill="#1a1a1a" textLength="12.5" lengthAdjust="spacingAndGlyphs" stroke="#1a1a1a" stroke-width="0.14">Sens</text>
<text x="743" y="101.3" font-size="6.4" fill="#1a1a1a" textLength="24.2" lengthAdjust="spacingAndGlyphs" stroke="#1a1a1a" stroke-width="0.14">Nominal</text>
<text x="793.3" y="101.3" font-size="6.4" fill="#1a1a1a" textLength="26.2" lengthAdjust="spacingAndGlyphs" stroke="#1a1a1a" stroke-width="0.14">Tolerance</text>
<text x="871" y="101.3" font-size="6.4" fill="#1a1a1a" textLength="7.2" lengthAdjust="spacingAndGlyphs" stroke="#1a1a1a" stroke-width="0.14">Cp</text>
<rect x="1013.6" y="92.8" width="7.6" height="249" fill="#f0f0f0"/>
<rect x="1014.4" y="159.8" width="6.6" height="171.6" fill="#cdcdcd"/>
<path d="M1015.8 98.6l2 -2l2 2" fill="none" stroke="#555" stroke-width="0.8"/>
<path d="M1015.8 336l2 2l2 -2" fill="none" stroke="#555" stroke-width="0.8"/>
<text x="613" y="114" font-size="6.4" fill="#1a1a1a" textLength="71.6" lengthAdjust="spacingAndGlyphs" stroke="#1a1a1a" stroke-width="0.14">hex flange screw; refset ...</text>
<path d="M848.1 109.2h5.8l-2.9 4.7z" fill="#111"/>
<text x="868.6" y="114" font-size="6.4" fill="#1a1a1a" textLength="33.8" lengthAdjust="spacingAndGlyphs" stroke="#1a1a1a" stroke-width="0.14">Default (1.0)</text>
<circle cx="595.7" cy="130.5" r="3.6" fill="#fff" stroke="#333" stroke-width="0.6"/>
<circle cx="595.7" cy="130.5" r="1.7" fill="#111"/>
<text x="613" y="133" font-size="6.4" fill="#1a1a1a" textLength="4.2" lengthAdjust="spacingAndGlyphs" stroke="#1a1a1a" stroke-width="0.14">A</text>
<rect x="692.1999999999999" y="125.1" width="7.2" height="8.2" fill="#d2d2d2" stroke="#6e6e6e" stroke-width="0.7" rx="0.9"/>
<rect x="690.3999999999999" y="126.64999999999999" width="7.2" height="8.2" fill="#d2d2d2" stroke="#6e6e6e" stroke-width="0.7" rx="0.9"/>
<rect x="688.5999999999999" y="128.2" width="7.2" height="8.2" fill="#ffffff" stroke="#6e6e6e" stroke-width="0.7" rx="0.9"/>
<rect x="689.4999999999999" y="129.1" width="5.4" height="3.6" fill="#8e8e8e"/>
<text x="722.8" y="133" font-size="6.4" fill="#1a1a1a" textLength="10" lengthAdjust="spacingAndGlyphs" text-anchor="middle" stroke="#1a1a1a" stroke-width="0.14">+½</text>
<text x="769" y="133" font-size="6.4" fill="#1a1a1a" textLength="26.2" lengthAdjust="spacingAndGlyphs" text-anchor="end" stroke="#1a1a1a" stroke-width="0.14">(Ø10.000)</text>
<path d="M777.9000000000001 121.8h4.6" fill="none" stroke="#111" stroke-width="1"/>
<path d="M780.2 122.6l2 2.4h-4z" fill="#111"/>
<path d="M780.2 124.8v3.4" fill="none" stroke="#111" stroke-width="0.9"/>
<path d="M778.5 126.39999999999999h3.4" fill="none" stroke="#111" stroke-width="0.7"/>
<path d="M780.2 134.4v3" fill="none" stroke="#111" stroke-width="0.9"/>
<path d="M778.5 136.0h3.4" fill="none" stroke="#111" stroke-width="0.7"/>
<path d="M780.2 139.6l2-2.4h-4z" fill="#111"/>
<path d="M777.9000000000001 140.20000000000002h4.6" fill="none" stroke="#111" stroke-width="1"/>
<text x="790.8" y="127" font-size="6.4" fill="#1a1a1a" textLength="14.6" lengthAdjust="spacingAndGlyphs" stroke="#1a1a1a" stroke-width="0.14">9.972</text>
<text x="790.8" y="139.6" font-size="6.4" fill="#1a1a1a" textLength="14.6" lengthAdjust="spacingAndGlyphs" stroke="#1a1a1a" stroke-width="0.14">9.760</text>
<g transform="translate(832.2 130.6) rotate(45)" fill="none" stroke="#2a2a2a" stroke-width="1.15"><rect x="-5.2" y="-1.9" width="5.6" height="3.8" rx="1.9"/><rect x="-0.4" y="-1.9" width="5.6" height="3.8" rx="1.9"/></g>
<path d="M848.1 128.4h5.8l-2.9 4.7z" fill="#111"/>
<text x="868.6" y="133" font-size="6.4" fill="#1a1a1a" textLength="25.6" lengthAdjust="spacingAndGlyphs" stroke="#1a1a1a" stroke-width="0.14">Part (1.0)</text>
<text x="613" y="152.8" font-size="6.4" fill="#1a1a1a" textLength="73" lengthAdjust="spacingAndGlyphs" stroke="#1a1a1a" stroke-width="0.14">Top Plate; refset MODEL ...</text>
<path d="M848.1 147.8h5.8l-2.9 4.7z" fill="#111"/>
<text x="868.6" y="152.8" font-size="6.4" fill="#1a1a1a" textLength="33.8" lengthAdjust="spacingAndGlyphs" stroke="#1a1a1a" stroke-width="0.14">Default (1.0)</text>
<line x1="595.7" y1="166" x2="595.7" y2="185" stroke="#111" stroke-width="1" />
<path d="M593 183.6h5.4l-2.7 4.4z" fill="#111"/>
<circle cx="595.7" cy="163.9" r="3.6" fill="#f4f4f4" stroke="#555" stroke-width="0.6"/>
<circle cx="595.7" cy="163.9" r="1.5" fill="#6db33f"/>
<text x="613" y="165.3" font-size="6.4" fill="#1a1a1a" textLength="15.8" lengthAdjust="spacingAndGlyphs" stroke="#1a1a1a" stroke-width="0.14">Hole6</text>
<text x="722.8" y="165.3" font-size="6.4" fill="#1a1a1a" textLength="3.4" lengthAdjust="spacingAndGlyphs" text-anchor="middle" stroke="#1a1a1a" stroke-width="0.14">0</text>
<text x="769" y="165.3" font-size="6.4" fill="#1a1a1a" textLength="19.4" lengthAdjust="spacingAndGlyphs" text-anchor="end" stroke="#1a1a1a" stroke-width="0.14">(Ø8.50)</text>
<text x="780.2" y="165.60000000000002" font-size="9" fill="#111" text-anchor="middle" stroke="#111" stroke-width="0.3">±</text>
<text x="790.8" y="165.3" font-size="6.4" fill="#1a1a1a" textLength="11.4" lengthAdjust="spacingAndGlyphs" stroke="#1a1a1a" stroke-width="0.14">0.05</text>
<path d="M848.1 160.60000000000002h5.8l-2.9 4.7z" fill="#111"/>
<text x="868.6" y="165.3" font-size="6.4" fill="#1a1a1a" textLength="25.6" lengthAdjust="spacingAndGlyphs" stroke="#1a1a1a" stroke-width="0.14">Part (1.0)</text>
<text x="613" y="178" font-size="6.4" fill="#1a1a1a" textLength="33.4" lengthAdjust="spacingAndGlyphs" stroke="#1a1a1a" stroke-width="0.14">Dimension6</text>
<text x="722.8" y="178" font-size="6.4" fill="#1a1a1a" textLength="6.6" lengthAdjust="spacingAndGlyphs" text-anchor="middle" stroke="#1a1a1a" stroke-width="0.14">+1</text>
<text x="769" y="178" font-size="6.4" fill="#1a1a1a" textLength="13.4" lengthAdjust="spacingAndGlyphs" text-anchor="end" stroke="#1a1a1a" stroke-width="0.14">105.0</text>
<text x="780.2" y="178.3" font-size="9" fill="#111" text-anchor="middle" stroke="#111" stroke-width="0.3">±</text>
<text x="790.8" y="178" font-size="6.4" fill="#1a1a1a" textLength="8" lengthAdjust="spacingAndGlyphs" stroke="#1a1a1a" stroke-width="0.14">0.1</text>
<path d="M848.1 173.3h5.8l-2.9 4.7z" fill="#111"/>
<text x="868.6" y="178" font-size="6.4" fill="#1a1a1a" textLength="25.6" lengthAdjust="spacingAndGlyphs" stroke="#1a1a1a" stroke-width="0.14">Part (1.0)</text>
<circle cx="595.7" cy="189.7" r="3.6" fill="none" stroke="#555" stroke-width="0.6"/><circle cx="595.7" cy="189.9" r="1.6" fill="#e8121c"/>
<text x="613" y="190.8" font-size="6.4" fill="#1a1a1a" textLength="15.8" lengthAdjust="spacingAndGlyphs" stroke="#1a1a1a" stroke-width="0.14">Hole7</text>
<text x="722.8" y="190.8" font-size="6.4" fill="#1a1a1a" textLength="3.4" lengthAdjust="spacingAndGlyphs" text-anchor="middle" stroke="#1a1a1a" stroke-width="0.14">0</text>
<text x="769" y="190.8" font-size="6.4" fill="#1a1a1a" textLength="19.4" lengthAdjust="spacingAndGlyphs" text-anchor="end" stroke="#1a1a1a" stroke-width="0.14">(Ø8.50)</text>
<text x="780.2" y="191.10000000000002" font-size="9" fill="#111" text-anchor="middle" stroke="#111" stroke-width="0.3">±</text>
<text x="790.8" y="190.8" font-size="6.4" fill="#1a1a1a" textLength="11.4" lengthAdjust="spacingAndGlyphs" stroke="#1a1a1a" stroke-width="0.14">0.05</text>
<path d="M848.1 186.10000000000002h5.8l-2.9 4.7z" fill="#111"/>
<text x="868.6" y="190.8" font-size="6.4" fill="#1a1a1a" textLength="25.6" lengthAdjust="spacingAndGlyphs" stroke="#1a1a1a" stroke-width="0.14">Part (1.0)</text>
<text x="613" y="203.7" font-size="6.4" fill="#1a1a1a" textLength="71.6" lengthAdjust="spacingAndGlyphs" stroke="#1a1a1a" stroke-width="0.14">hex flange screw; refset ...</text>
<path d="M848.1 198.8h5.8l-2.9 4.7z" fill="#111"/>
<text x="868.6" y="203.7" font-size="6.4" fill="#1a1a1a" textLength="33.8" lengthAdjust="spacingAndGlyphs" stroke="#1a1a1a" stroke-width="0.14">Default (1.0)</text>
<circle cx="595.7" cy="220.2" r="3.6" fill="#fff" stroke="#333" stroke-width="0.6"/>
<circle cx="595.7" cy="220.2" r="1.7" fill="#111"/>
<text x="613" y="222.6" font-size="6.4" fill="#1a1a1a" textLength="4.2" lengthAdjust="spacingAndGlyphs" stroke="#1a1a1a" stroke-width="0.14">A</text>
<rect x="692.1999999999999" y="214.7" width="7.2" height="8.2" fill="#d2d2d2" stroke="#6e6e6e" stroke-width="0.7" rx="0.9"/>
<rect x="690.3999999999999" y="216.24999999999997" width="7.2" height="8.2" fill="#d2d2d2" stroke="#6e6e6e" stroke-width="0.7" rx="0.9"/>
<rect x="688.5999999999999" y="217.79999999999998" width="7.2" height="8.2" fill="#ffffff" stroke="#6e6e6e" stroke-width="0.7" rx="0.9"/>
<rect x="689.4999999999999" y="218.7" width="5.4" height="3.6" fill="#8e8e8e"/>
<text x="722.8" y="222.6" font-size="6.4" fill="#1a1a1a" textLength="10" lengthAdjust="spacingAndGlyphs" text-anchor="middle" stroke="#1a1a1a" stroke-width="0.14">+½</text>
<text x="769" y="222.6" font-size="6.4" fill="#1a1a1a" textLength="26.2" lengthAdjust="spacingAndGlyphs" text-anchor="end" stroke="#1a1a1a" stroke-width="0.14">(Ø10.000)</text>
<path d="M777.9000000000001 211.4h4.6" fill="none" stroke="#111" stroke-width="1"/>
<path d="M780.2 212.20000000000002l2 2.4h-4z" fill="#111"/>
<path d="M780.2 214.4v3.4" fill="none" stroke="#111" stroke-width="0.9"/>
<path d="M778.5 216.0h3.4" fill="none" stroke="#111" stroke-width="0.7"/>
<path d="M780.2 224v3" fill="none" stroke="#111" stroke-width="0.9"/>
<path d="M778.5 225.6h3.4" fill="none" stroke="#111" stroke-width="0.7"/>
<path d="M780.2 229.2l2-2.4h-4z" fill="#111"/>
<path d="M777.9000000000001 229.8h4.6" fill="none" stroke="#111" stroke-width="1"/>
<text x="790.8" y="216.6" font-size="6.4" fill="#1a1a1a" textLength="14.6" lengthAdjust="spacingAndGlyphs" stroke="#1a1a1a" stroke-width="0.14">9.972</text>
<text x="790.8" y="229.2" font-size="6.4" fill="#1a1a1a" textLength="14.6" lengthAdjust="spacingAndGlyphs" stroke="#1a1a1a" stroke-width="0.14">9.760</text>
<g transform="translate(832.2 220.2) rotate(45)" fill="none" stroke="#2a2a2a" stroke-width="1.15"><rect x="-5.2" y="-1.9" width="5.6" height="3.8" rx="1.9"/><rect x="-0.4" y="-1.9" width="5.6" height="3.8" rx="1.9"/></g>
<path d="M848.1 218.0h5.8l-2.9 4.7z" fill="#111"/>
<text x="868.6" y="222.6" font-size="6.4" fill="#1a1a1a" textLength="25.6" lengthAdjust="spacingAndGlyphs" stroke="#1a1a1a" stroke-width="0.14">Part (1.0)</text>
<line x1="591" y1="239.5" x2="600.6" y2="239.5" stroke="#111" stroke-width="1.1" />
<path d="M589.3 239.5l4.2-2.9v5.8z" fill="#111"/>
<path d="M602.3 239.5l-4.2-2.9v5.8z" fill="#111"/>
<text x="613" y="241.7" font-size="6.4" fill="#1a1a1a" textLength="51.4" lengthAdjust="spacingAndGlyphs" stroke="#1a1a1a" stroke-width="0.14">Asm shift A-Hole8</text>
<text x="722.8" y="241.7" font-size="6.4" fill="#1a1a1a" textLength="6.6" lengthAdjust="spacingAndGlyphs" text-anchor="middle" stroke="#1a1a1a" stroke-width="0.14">+1</text>
<text x="769" y="241.7" font-size="6.4" fill="#1a1a1a" textLength="3.4" lengthAdjust="spacingAndGlyphs" text-anchor="end" stroke="#1a1a1a" stroke-width="0.14">0</text>
<text x="780.2" y="242.0" font-size="9" fill="#111" text-anchor="middle" stroke="#111" stroke-width="0.3">±</text>
<text x="790.8" y="241.7" font-size="6.4" fill="#1a1a1a" textLength="14.6" lengthAdjust="spacingAndGlyphs" stroke="#1a1a1a" stroke-width="0.14">0.342</text>
<text x="613" y="254.7" font-size="6.4" fill="#1a1a1a" textLength="71.6" lengthAdjust="spacingAndGlyphs" stroke="#1a1a1a" stroke-width="0.14">Support Arm; refset MO...</text>
<path d="M848.1 250.0h5.8l-2.9 4.7z" fill="#111"/>
<text x="868.6" y="254.7" font-size="6.4" fill="#1a1a1a" textLength="33.8" lengthAdjust="spacingAndGlyphs" stroke="#1a1a1a" stroke-width="0.14">Default (1.0)</text>
<line x1="595.7" y1="275" x2="595.7" y2="302" stroke="#111" stroke-width="1" />
<path d="M593 300.6h5.4l-2.7 4.6z" fill="#111"/>
<line x1="592.2" y1="305.7" x2="599.2" y2="305.7" stroke="#111" stroke-width="0.8" />
<circle cx="595.7" cy="272.7" r="3.6" fill="#f4f4f4" stroke="#555" stroke-width="0.6"/>
<circle cx="595.7" cy="272.7" r="1.5" fill="#6db33f"/>
<text x="613" y="273.8" font-size="6.4" fill="#1a1a1a" textLength="15.8" lengthAdjust="spacingAndGlyphs" stroke="#1a1a1a" stroke-width="0.14">Hole8</text>
<text x="722.8" y="273.8" font-size="6.4" fill="#1a1a1a" textLength="10" lengthAdjust="spacingAndGlyphs" text-anchor="middle" stroke="#1a1a1a" stroke-width="0.14">+½</text>
<text x="769" y="273.8" font-size="6.4" fill="#1a1a1a" textLength="18.2" lengthAdjust="spacingAndGlyphs" text-anchor="end" stroke="#1a1a1a" stroke-width="0.14">Ø10.50</text>
<text x="780.2" y="268.6" font-size="7" fill="#111" text-anchor="middle" stroke="#111" stroke-width="0.3">+</text>
<text x="780.2" y="278.9" font-size="7" fill="#111" text-anchor="middle" stroke="#111" stroke-width="0.3">−</text>
<text x="790.8" y="268.4" font-size="6.4" fill="#1a1a1a" textLength="11.4" lengthAdjust="spacingAndGlyphs" stroke="#1a1a1a" stroke-width="0.14">0.13</text>
<text x="790.8" y="281" font-size="6.4" fill="#1a1a1a" textLength="11.4" lengthAdjust="spacingAndGlyphs" stroke="#1a1a1a" stroke-width="0.14">0.03</text>
<g transform="translate(832.2 271.4) rotate(45)" fill="none" stroke="#2a2a2a" stroke-width="1.15"><rect x="-5.2" y="-1.9" width="5.6" height="3.8" rx="1.9"/><rect x="-0.4" y="-1.9" width="5.6" height="3.8" rx="1.9"/></g>
<path d="M848.1 269.0h5.8l-2.9 4.7z" fill="#111"/>
<text x="868.6" y="273.8" font-size="6.4" fill="#1a1a1a" textLength="25.6" lengthAdjust="spacingAndGlyphs" stroke="#1a1a1a" stroke-width="0.14">Part (1.0)</text>
<text x="613" y="293.3" font-size="6.4" fill="#1a1a1a" textLength="33.4" lengthAdjust="spacingAndGlyphs" stroke="#1a1a1a" stroke-width="0.14">Dimension7</text>
<text x="722.8" y="293.3" font-size="6.4" fill="#1a1a1a" textLength="6.6" lengthAdjust="spacingAndGlyphs" text-anchor="middle" stroke="#1a1a1a" stroke-width="0.14">+1</text>
<text x="769" y="293.3" font-size="6.4" fill="#1a1a1a" textLength="10" lengthAdjust="spacingAndGlyphs" text-anchor="end" stroke="#1a1a1a" stroke-width="0.14">12.5</text>
<text x="780.2" y="293.6" font-size="9" fill="#111" text-anchor="middle" stroke="#111" stroke-width="0.3">±</text>
<text x="790.8" y="293.3" font-size="6.4" fill="#1a1a1a" textLength="8" lengthAdjust="spacingAndGlyphs" stroke="#1a1a1a" stroke-width="0.14">0.1</text>
<path d="M848.1 288.40000000000003h5.8l-2.9 4.7z" fill="#111"/>
<text x="868.6" y="293.3" font-size="6.4" fill="#1a1a1a" textLength="25.6" lengthAdjust="spacingAndGlyphs" stroke="#1a1a1a" stroke-width="0.14">Part (1.0)</text>
<text x="613" y="306" font-size="6.4" fill="#1a1a1a" textLength="15.6" lengthAdjust="spacingAndGlyphs" stroke="#1a1a1a" stroke-width="0.14">Face4</text>
<line x1="595.7" y1="313.4" x2="595.7" y2="320.6" stroke="#111" stroke-width="0.8" />
<line x1="592.6" y1="313.2" x2="598.8" y2="313.2" stroke="#444" stroke-width="0.6" />
<line x1="592.6" y1="320.8" x2="598.8" y2="320.8" stroke="#444" stroke-width="0.6" />
<circle cx="595.7" cy="313.4" r="1.1" fill="#20a030"/><circle cx="595.7" cy="320.6" r="1.1" fill="#e8121c"/>
<text x="613" y="318.9" font-size="6.4" fill="#1a1a1a" textLength="62" lengthAdjust="spacingAndGlyphs" stroke="#1a1a1a" stroke-width="0.14">Overall Width of Arms</text>
<text x="769" y="318.9" font-size="6.4" fill="#1a1a1a" textLength="21.2" lengthAdjust="spacingAndGlyphs" text-anchor="end" stroke="#1a1a1a" stroke-width="0.14">(130.00)</text>
<text x="780.2" y="320" font-size="10" fill="#111" text-anchor="middle" stroke="#111" stroke-width="0.3">≤</text>
<text x="790.8" y="318.9" font-size="6.4" fill="#e8121c" textLength="17.8" lengthAdjust="spacingAndGlyphs" stroke="#e8121c" stroke-width="0.14">130.78</text>
<text x="868.6" y="318.9" font-size="6.4" fill="#1a1a1a" textLength="29.6" lengthAdjust="spacingAndGlyphs" stroke="#1a1a1a" stroke-width="0.14">Cpk = 0.68</text>
<text x="613" y="331.9" font-size="6.4" fill="#1a1a1a" textLength="46.4" lengthAdjust="spacingAndGlyphs" stroke="#1a1a1a" stroke-width="0.14">Objectives (mm)</text>
<text x="769" y="331.9" font-size="6.4" fill="#1a1a1a" textLength="21.2" lengthAdjust="spacingAndGlyphs" text-anchor="end" stroke="#1a1a1a" stroke-width="0.14">(130.00)</text>
<text x="780.2" y="333" font-size="10" fill="#111" text-anchor="middle" stroke="#111" stroke-width="0.3">≤</text>
<text x="790.8" y="331.9" font-size="6.4" fill="#1a1a1a" textLength="17.8" lengthAdjust="spacingAndGlyphs" stroke="#1a1a1a" stroke-width="0.14">130.50</text>
<path d="M848.1 327.2h5.8l-2.9 4.7z" fill="#111"/>
<text x="868.6" y="331.9" font-size="6.4" fill="#1a1a1a" textLength="29.6" lengthAdjust="spacingAndGlyphs" stroke="#1a1a1a" stroke-width="0.14">Cpk = 1.00</text>
<rect x="590" y="346.3" width="430.6" height="205.4" fill="#ffffff" stroke="#bfbfbf" stroke-width="0.7"/>
<text x="601" y="362.9" font-size="6.2" fill="#000" textLength="131.6" lengthAdjust="spacingAndGlyphs" font-weight="bold">Statistical Results for Overall Width of Arms</text>
<text x="601" y="373.7" font-size="6.1" fill="#111" textLength="69.2" lengthAdjust="spacingAndGlyphs" stroke="none">Target Quality: Cpk = 1.00</text>
<text x="601" y="380.6" font-size="6.1" fill="#111" textLength="76.2" lengthAdjust="spacingAndGlyphs" stroke="none">Predicted Quality: Cpk = 0.68</text>
<text x="601" y="387.5" font-size="6.1" fill="#111" textLength="46" lengthAdjust="spacingAndGlyphs" stroke="none">Mean: 129.92 mm</text>
<text x="601" y="394.3" font-size="6.1" fill="#111" textLength="74.4" lengthAdjust="spacingAndGlyphs" stroke="none">Standard Deviation: 0.29 mm</text>
<rect x="601.5" y="413.3" width="409.6" height="80.09999999999997" fill="#ffffff"/>
<path d="M663.4 493.4 L663.4 490.9 L667.4 490.4 L671.5 489.8 L675.5 489.1 L679.5 488.4 L683.6 487.5 L687.6 486.4 L691.7 485.3 L695.7 484.0 L699.7 482.6 L703.8 481.0 L707.8 479.3 L711.8 477.4 L715.9 475.3 L719.9 473.1 L724.0 470.7 L728.0 468.2 L732.0 465.6 L736.1 462.8 L740.1 460.0 L744.1 457.1 L748.2 454.1 L752.2 451.1 L756.2 448.2 L760.3 445.3 L764.3 442.4 L768.4 439.7 L772.4 437.1 L776.4 434.7 L780.5 432.6 L784.5 430.7 L788.5 429.1 L792.6 427.7 L796.6 426.8 L800.6 426.1 L804.7 425.8 L808.7 425.9 L812.8 426.3 L816.8 427.1 L820.8 428.2 L824.9 429.6 L828.9 431.3 L832.9 433.3 L837.0 435.6 L841.0 438.0 L845.0 440.6 L849.1 443.4 L853.1 446.3 L857.2 449.2 L861.2 452.2 L865.2 455.2 L869.3 458.1 L873.3 461.0 L877.3 463.8 L881.4 466.5 L885.4 469.1 L889.5 471.6 L893.5 473.9 L897.5 476.0 L901.6 478.0 L905.6 479.9 L905.6 493.4z" fill="#168f21"/>
<path d="M905.6 493.4 L905.6 479.9 L906.3 480.2 L907.0 480.5 L907.7 480.8 L908.5 481.1 L909.2 481.4 L909.9 481.7 L910.6 482.0 L911.3 482.2 L912.0 482.5 L912.7 482.8 L913.4 483.0 L914.2 483.3 L914.9 483.5 L915.6 483.8 L916.3 484.0 L917.0 484.3 L917.7 484.5 L918.4 484.7 L919.2 484.9 L919.9 485.2 L920.6 485.4 L921.3 485.6 L922.0 485.8 L922.7 486.0 L923.4 486.2 L924.1 486.4 L924.9 486.6 L925.6 486.8 L926.3 486.9 L927.0 487.1 L927.7 487.3 L928.4 487.5 L929.1 487.6 L929.9 487.8 L930.6 488.0 L931.3 488.1 L932.0 488.3 L932.7 488.4 L933.4 488.6 L934.1 488.7 L934.8 488.8 L935.6 489.0 L936.3 489.1 L937.0 489.2 L937.7 489.4 L938.4 489.5 L939.1 489.6 L939.8 489.7 L940.6 489.8 L941.3 489.9 L942.0 490.0 L942.7 490.1 L943.4 490.2 L944.1 490.3 L944.8 490.4 L945.5 490.5 L946.3 490.6 L947.0 490.7 L947.7 490.8 L948.4 490.9 L948.4 493.4z" fill="#c0262c"/>
<rect x="601.5" y="413.3" width="409.6" height="80.09999999999997" fill="none" stroke="#444" stroke-width="0.8"/>
<line x1="905.6" y1="413.3" x2="905.6" y2="496.4" stroke="#000" stroke-width="1.4" />
<line x1="952.1" y1="409.6" x2="952.1" y2="493.4" stroke="#bb1f27" stroke-width="1.3" />
<line x1="819.7" y1="493.4" x2="819.7" y2="496.4" stroke="#000" stroke-width="1" />
<text x="811.1" y="503.7" font-size="6" fill="#111" textLength="27.3" lengthAdjust="spacingAndGlyphs" stroke="none">130.00 mm</text>
<text x="896.6" y="503.7" font-size="6" fill="#111" textLength="27.3" lengthAdjust="spacingAndGlyphs" stroke="none">130.50 mm</text>
<text x="943.5" y="406.2" font-size="6" fill="#111" textLength="27.3" lengthAdjust="spacingAndGlyphs" stroke="none">130.78 mm</text>
<path d="M607.2 514l6.6 11.8h-13.2z" fill="#f7d417" stroke="#f7d417" stroke-width="0.6" stroke-linejoin="round"/>
<text x="607.2" y="524.7" font-size="8.4" fill="#111" font-weight="bold" text-anchor="middle">!</text>
<text x="615.6" y="522.6" font-size="6.6" fill="#000" textLength="190.4" lengthAdjust="spacingAndGlyphs" font-weight="bold">Calculated results are ignoring potentially significant 3D effects</text>
<rect x="590" y="552" width="30.8" height="11.8" fill="#ffffff"/>
<line x1="620.8" y1="563" x2="666" y2="563" stroke="#dcdcdc" stroke-width="0.7" />
<text x="594.6" y="560.8" font-size="6.2" fill="#1a1a1a" textLength="19" lengthAdjust="spacingAndGlyphs" stroke="#1a1a1a" stroke-width="0.14">Results</text>
<text x="626.4" y="560.2" font-size="6.2" fill="#1a1a1a" textLength="34.2" lengthAdjust="spacingAndGlyphs" stroke="#1a1a1a" stroke-width="0.14">Contributions</text>
</svg>
</body></html>
